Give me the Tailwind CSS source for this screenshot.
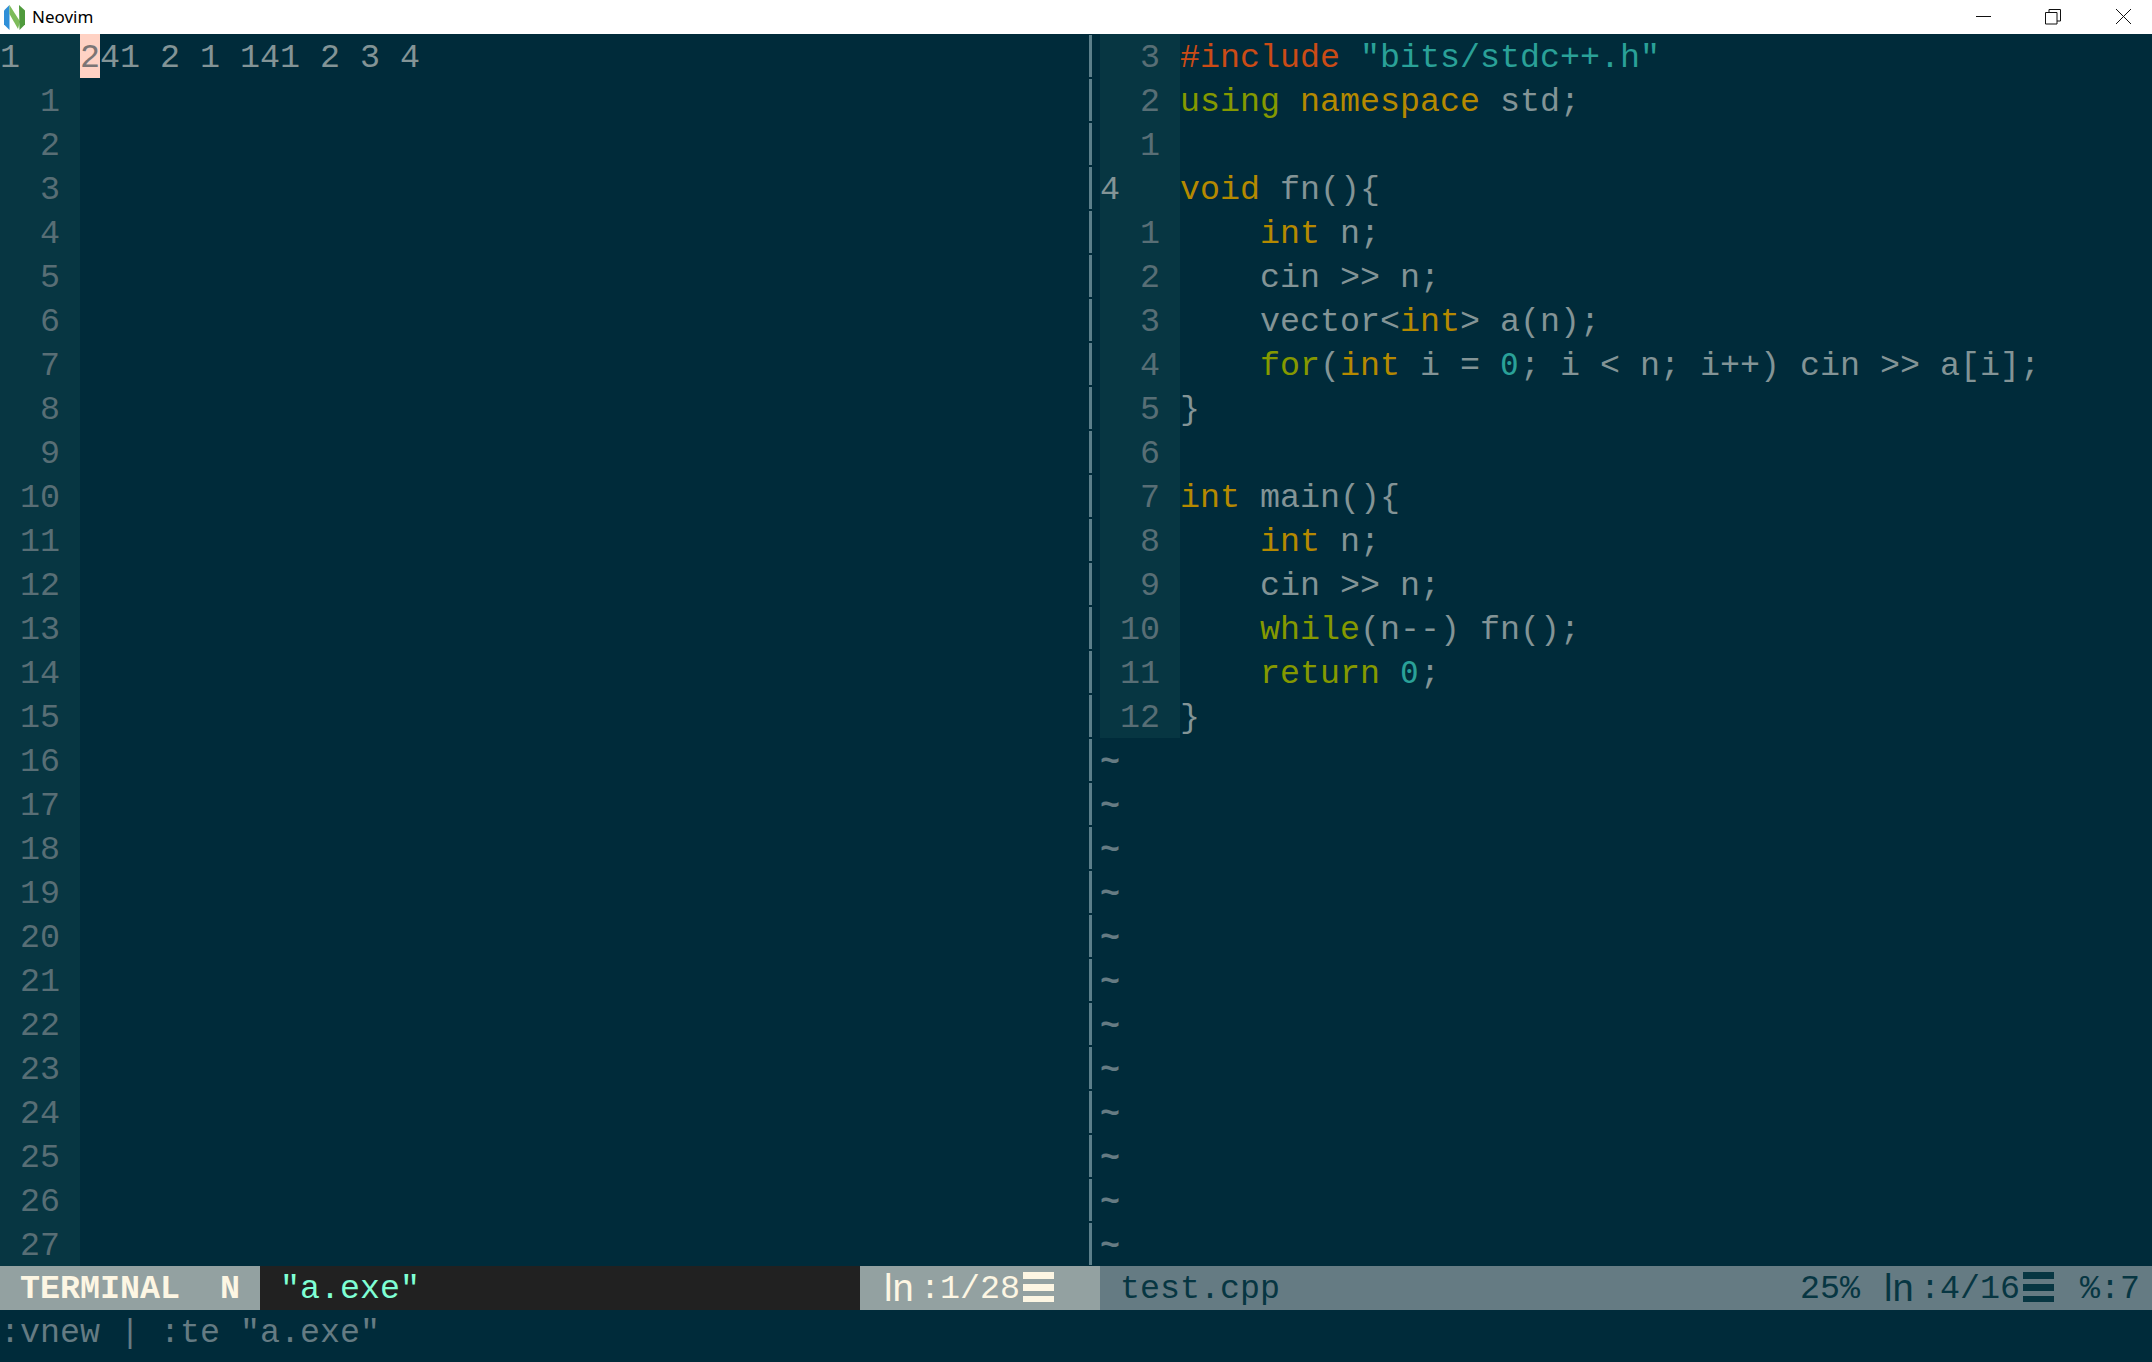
<!DOCTYPE html>
<html>
<head>
<meta charset="utf-8">
<script src="https://cdn.jsdelivr.net/npm/@tailwindcss/browser@4"></script>
<title>Neovim</title>
</head>
<body class="w-[2152px] h-[1362px] overflow-hidden flex flex-col bg-[#002b3a] font-['Liberation_Mono',monospace] text-[33.33px] leading-[48px] text-[#839496] whitespace-pre">
<header class="h-[34px] bg-white flex items-center">
  <svg class="ml-[4px]" width="21" height="25" viewBox="0 0 21 25">
    <path d="M0 5.500 5.500 0v25L0 19.500z" fill="#2f8fd8"/>
    <path d="M5.500 0 16 16.500 14 24 5.500 9z" fill="#7dbb5a"/>
    <path d="M15 0l6 5.500v14L15.500 25z" fill="#4f9a3c"/>
  </svg>
  <span class="ml-[7px] font-['Noto_Sans',sans-serif] text-[17px] leading-[34px] text-black">Neovim</span>
  <div class="ml-auto flex items-center">
    <svg width="15" height="34" viewBox="0 0 15 34"><path d="M0 16.500h15" stroke="#111" fill="none"/></svg>
    <svg class="ml-[54px]" width="16" height="34" viewBox="0 0 16 34"><path d="M.5 12.500h11.500v11.500H.5zM4 12.500V9.500h11.500V21H12" stroke="#111" fill="none"/></svg>
    <svg class="ml-[55px] mr-[21px]" width="15" height="34" viewBox="0 0 15 34"><path d="M0 9l15 15M15 9 0 24" stroke="#111" fill="none"/></svg>
  </div>
</header>
<main class="flex h-[1232px] overflow-hidden">
  <section class="w-[1080px] flex flex-col">
    <div class="h-[44px] flex"><span class="w-[80px] bg-[#073642]">1</span><span class="bg-[#ffd2c4] text-[#7b7575]">2</span><span>41 2 1 141 2 3 4</span></div>
    <div class="h-[44px] flex"><span class="w-[80px] bg-[#073642] text-[#586e75]">  1</span></div>
    <div class="h-[44px] flex"><span class="w-[80px] bg-[#073642] text-[#586e75]">  2</span></div>
    <div class="h-[44px] flex"><span class="w-[80px] bg-[#073642] text-[#586e75]">  3</span></div>
    <div class="h-[44px] flex"><span class="w-[80px] bg-[#073642] text-[#586e75]">  4</span></div>
    <div class="h-[44px] flex"><span class="w-[80px] bg-[#073642] text-[#586e75]">  5</span></div>
    <div class="h-[44px] flex"><span class="w-[80px] bg-[#073642] text-[#586e75]">  6</span></div>
    <div class="h-[44px] flex"><span class="w-[80px] bg-[#073642] text-[#586e75]">  7</span></div>
    <div class="h-[44px] flex"><span class="w-[80px] bg-[#073642] text-[#586e75]">  8</span></div>
    <div class="h-[44px] flex"><span class="w-[80px] bg-[#073642] text-[#586e75]">  9</span></div>
    <div class="h-[44px] flex"><span class="w-[80px] bg-[#073642] text-[#586e75]"> 10</span></div>
    <div class="h-[44px] flex"><span class="w-[80px] bg-[#073642] text-[#586e75]"> 11</span></div>
    <div class="h-[44px] flex"><span class="w-[80px] bg-[#073642] text-[#586e75]"> 12</span></div>
    <div class="h-[44px] flex"><span class="w-[80px] bg-[#073642] text-[#586e75]"> 13</span></div>
    <div class="h-[44px] flex"><span class="w-[80px] bg-[#073642] text-[#586e75]"> 14</span></div>
    <div class="h-[44px] flex"><span class="w-[80px] bg-[#073642] text-[#586e75]"> 15</span></div>
    <div class="h-[44px] flex"><span class="w-[80px] bg-[#073642] text-[#586e75]"> 16</span></div>
    <div class="h-[44px] flex"><span class="w-[80px] bg-[#073642] text-[#586e75]"> 17</span></div>
    <div class="h-[44px] flex"><span class="w-[80px] bg-[#073642] text-[#586e75]"> 18</span></div>
    <div class="h-[44px] flex"><span class="w-[80px] bg-[#073642] text-[#586e75]"> 19</span></div>
    <div class="h-[44px] flex"><span class="w-[80px] bg-[#073642] text-[#586e75]"> 20</span></div>
    <div class="h-[44px] flex"><span class="w-[80px] bg-[#073642] text-[#586e75]"> 21</span></div>
    <div class="h-[44px] flex"><span class="w-[80px] bg-[#073642] text-[#586e75]"> 22</span></div>
    <div class="h-[44px] flex"><span class="w-[80px] bg-[#073642] text-[#586e75]"> 23</span></div>
    <div class="h-[44px] flex"><span class="w-[80px] bg-[#073642] text-[#586e75]"> 24</span></div>
    <div class="h-[44px] flex"><span class="w-[80px] bg-[#073642] text-[#586e75]"> 25</span></div>
    <div class="h-[44px] flex"><span class="w-[80px] bg-[#073642] text-[#586e75]"> 26</span></div>
    <div class="h-[44px] flex"><span class="w-[80px] bg-[#073642] text-[#586e75]"> 27</span></div>
  </section>
  <div class="w-[20px] h-[1232px] bg-[repeating-linear-gradient(to_bottom,#002b3a_0,#002b3a_1px,#5c7f8a_1px,#5c7f8a_43px,#002b3a_43px,#002b3a_44px)] bg-[length:3px_100%] bg-no-repeat bg-[position:9px_0]"></div>
  <section class="flex-1 flex flex-col">
    <div class="h-[44px] flex"><span class="w-[80px] bg-[#073642] text-[#586e75]">  3</span><span><span class="text-[#cb4b16]">#include</span> <span class="text-[#2aa198]">"bits/stdc++.h"</span></span></div>
    <div class="h-[44px] flex"><span class="w-[80px] bg-[#073642] text-[#586e75]">  2</span><span><span class="text-[#859900]">using</span> <span class="text-[#b58900]">namespace</span> std;</span></div>
    <div class="h-[44px] flex"><span class="w-[80px] bg-[#073642] text-[#586e75]">  1</span></div>
    <div class="h-[44px] flex"><span class="w-[80px] bg-[#073642] text-[#839496]">4</span><span><span class="text-[#b58900]">void</span> fn(){</span></div>
    <div class="h-[44px] flex"><span class="w-[80px] bg-[#073642] text-[#586e75]">  1</span><span>    <span class="text-[#b58900]">int</span> n;</span></div>
    <div class="h-[44px] flex"><span class="w-[80px] bg-[#073642] text-[#586e75]">  2</span><span>    cin &gt;&gt; n;</span></div>
    <div class="h-[44px] flex"><span class="w-[80px] bg-[#073642] text-[#586e75]">  3</span><span>    vector&lt;<span class="text-[#b58900]">int</span>&gt; a(n);</span></div>
    <div class="h-[44px] flex"><span class="w-[80px] bg-[#073642] text-[#586e75]">  4</span><span>    <span class="text-[#859900]">for</span>(<span class="text-[#b58900]">int</span> i = <span class="text-[#2aa198] font-['DejaVu_Sans_Mono',monospace] text-[31px] leading-none tracking-[1.34px]">0</span>; i &lt; n; i++) cin &gt;&gt; a[i];</span></div>
    <div class="h-[44px] flex"><span class="w-[80px] bg-[#073642] text-[#586e75]">  5</span><span>}</span></div>
    <div class="h-[44px] flex"><span class="w-[80px] bg-[#073642] text-[#586e75]">  6</span></div>
    <div class="h-[44px] flex"><span class="w-[80px] bg-[#073642] text-[#586e75]">  7</span><span><span class="text-[#b58900]">int</span> main(){</span></div>
    <div class="h-[44px] flex"><span class="w-[80px] bg-[#073642] text-[#586e75]">  8</span><span>    <span class="text-[#b58900]">int</span> n;</span></div>
    <div class="h-[44px] flex"><span class="w-[80px] bg-[#073642] text-[#586e75]">  9</span><span>    cin &gt;&gt; n;</span></div>
    <div class="h-[44px] flex"><span class="w-[80px] bg-[#073642] text-[#586e75]"> 10</span><span>    <span class="text-[#859900]">while</span>(n--) fn();</span></div>
    <div class="h-[44px] flex"><span class="w-[80px] bg-[#073642] text-[#586e75]"> 11</span><span>    <span class="text-[#859900]">return</span> <span class="text-[#2aa198] font-['DejaVu_Sans_Mono',monospace] text-[31px] leading-none tracking-[1.34px]">0</span>;</span></div>
    <div class="h-[44px] flex"><span class="w-[80px] bg-[#073642] text-[#586e75]"> 12</span><span>}</span></div>
    <div class="h-[44px] font-bold text-[#657b83]">~</div>
    <div class="h-[44px] font-bold text-[#657b83]">~</div>
    <div class="h-[44px] font-bold text-[#657b83]">~</div>
    <div class="h-[44px] font-bold text-[#657b83]">~</div>
    <div class="h-[44px] font-bold text-[#657b83]">~</div>
    <div class="h-[44px] font-bold text-[#657b83]">~</div>
    <div class="h-[44px] font-bold text-[#657b83]">~</div>
    <div class="h-[44px] font-bold text-[#657b83]">~</div>
    <div class="h-[44px] font-bold text-[#657b83]">~</div>
    <div class="h-[44px] font-bold text-[#657b83]">~</div>
    <div class="h-[44px] font-bold text-[#657b83]">~</div>
    <div class="h-[44px] font-bold text-[#657b83]">~</div>
  </section>
</main>
<footer class="h-[44px] flex overflow-hidden">
  <div class="w-[260px] bg-[#93a1a1] text-[#fdf6e3] font-bold leading-[46px]"> TERMINAL  N</div>
  <div class="w-[600px] bg-[#212121] text-[#7fffd4] leading-[46px]"> "a.exe"</div>
  <div class="w-[240px] bg-[#93a1a1] text-[#fdf6e3] flex leading-[46px]">
    <span class="w-[60px] pl-[24px] font-['Liberation_Sans',sans-serif] text-[38px] leading-[44px]">ln</span><span>:1/28</span>
    <span class="ml-[3px] mt-[6px] w-[31px] h-[30px] bg-[repeating-linear-gradient(to_bottom,#fdf6e3_0,#fdf6e3_7px,#93a1a1_7px,#93a1a1_12px)]"></span>
  </div>
  <div class="flex-1 bg-[#657b83] text-[#073642] flex leading-[46px]">
    <span class="w-[700px]"> test.cpp</span>
    <span class="w-[80px]">25%</span>
    <span class="w-[40px] pl-[4px] font-['Liberation_Sans',sans-serif] text-[38px] leading-[44px]">ln</span><span>:4/16</span>
    <span class="ml-[3px] mt-[6px] w-[31px] h-[30px] bg-[repeating-linear-gradient(to_bottom,#073642_0,#073642_7px,#657b83_7px,#657b83_12px)]"></span>
    <span class="ml-[26px]">%:7</span>
  </div>
</footer>
<div class="h-[52px] text-[#657b83] leading-[46px]">:vnew | :te "a.exe"</div>
</body>
</html>
